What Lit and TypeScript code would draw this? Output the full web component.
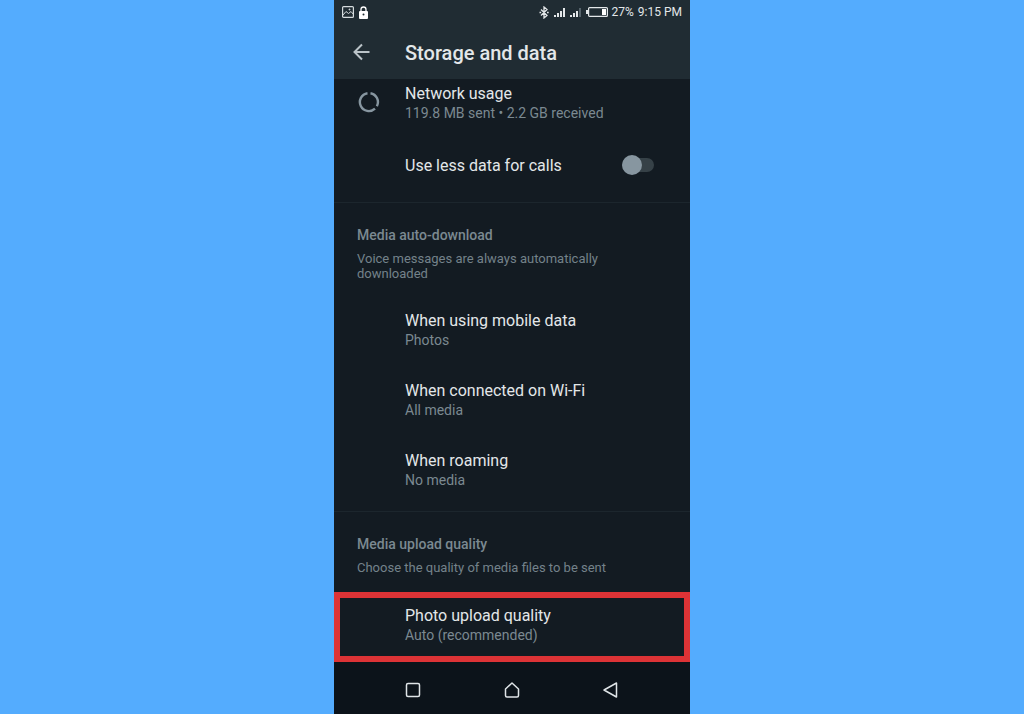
import { LitElement, html, css, svg } from "lit";
import { customElement, property, state } from "lit/decorators.js";

@customElement("setting-row")
class SettingRow extends LitElement {
  @property() label = "";
  @property() detail = "";
  @property({ type: Boolean }) marked = false;

  static styles = css`
    :host {
      display: block;
    }
    .row {
      box-sizing: border-box;
      display: grid;
      grid-template-columns: 24px 1fr;
      column-gap: 24px;
      align-items: center;
      width: 100%;
      padding: 16px 23px;
      border: 0;
      background: none;
      color: inherit;
      font: inherit;
      text-align: left;
      cursor: pointer;
    }
    .marked {
      padding: 8px 17px 12px;
      border: 6px solid #dd3336;
    }
    .text {
      display: flex;
      flex-direction: column;
    }
    .label {
      font-size: 16px;
      line-height: 20px;
      color: #e3e7e9;
    }
    .detail {
      font-size: 14px;
      line-height: 18px;
      color: #7b8991;
    }
    .icon {
      display: flex;
      justify-content: center;
      padding-bottom: 2px;
    }
  `;

  render() {
    return html`
      <button class="row ${this.marked ? "marked" : ""}" type="button">
        <span class="icon"><slot></slot></span>
        <span class="text">
          <span class="label">${this.label}</span>
          <span class="detail">${this.detail}</span>
        </span>
      </button>
    `;
  }
}

@customElement("app-root")
class AppRoot extends LitElement {
  @state() private lessData = false;

  static styles = css`
    :host {
      display: flex;
      justify-content: center;
      min-height: 100vh;
      background: #54acfe;
      font-family: Roboto, "Liberation Sans", sans-serif;
    }
    .phone {
      display: flex;
      flex-direction: column;
      width: 100%;
      max-width: 356px;
      background: #131b22;
      color: #e3e7e9;
    }
    .header {
      background: #202c33;
    }
    .status {
      display: flex;
      justify-content: space-between;
      align-items: center;
      height: 24px;
      padding: 0 8px;
      font-size: 12px;
      line-height: 16px;
      color: #e3e7e9;
    }
    .group {
      display: flex;
      align-items: center;
      gap: 4px;
    }
    .signals {
      display: flex;
      gap: 3px;
    }
    .bar {
      display: grid;
      grid-template-columns: 24px 1fr;
      column-gap: 28px;
      align-items: center;
      height: 55px;
      padding: 0 20px 0 16px;
    }
    .bar h1 {
      margin: 0;
      padding: 2px 0 0 3px;
      font-size: 20px;
      font-weight: 500;
      line-height: 24px;
    }
    .plain {
      display: flex;
      align-items: center;
      justify-content: center;
      padding: 0;
      border: 0;
      background: none;
      color: #dfe4e7;
      cursor: pointer;
    }
    .back {
      color: #bac3c8;
    }
    svg {
      display: block;
    }
    .content {
      flex: 1;
    }
    .section {
      padding-bottom: 6px;
      border-bottom: 1px solid #1c262d;
    }
    .section.first {
      margin-top: -11px;
      padding-bottom: 17px;
    }
    .section.last {
      padding-bottom: 0;
      border-bottom: 0;
    }
    .intro {
      padding: 22px 72px 14px 23px;
    }
    .last .intro {
      padding-bottom: 17px;
    }
    .intro h2 {
      margin: 0;
      font-size: 14px;
      font-weight: 500;
      line-height: 20px;
      color: #7b8991;
    }
    .intro p {
      margin: 6px 0 0;
      font-size: 13px;
      line-height: 15px;
      color: #74828a;
    }
    .toggle {
      display: flex;
      align-items: center;
      justify-content: space-between;
      padding: 16px 36px 9px 71px;
      font-size: 16px;
      line-height: 20px;
      cursor: pointer;
    }
    .toggle span {
      padding-top: 2px;
    }
    .switch {
      appearance: none;
      display: flex;
      align-items: center;
      width: 32px;
      height: 14px;
      margin: 0;
      border-radius: 7px;
      background: #364147;
      cursor: pointer;
    }
    .switch::before {
      content: "";
      width: 20px;
      height: 20px;
      flex: none;
      border-radius: 50%;
      background: #8796a0;
    }
    .switch:checked {
      justify-content: flex-end;
    }
    .nav {
      display: flex;
      justify-content: center;
      gap: 75px;
      padding: 16px 0 12px;
      background: #0c131a;
    }
  `;

  private signal(dimLast: boolean) {
    const heights = [2, 4, 6, 9];
    return html`<svg width="13" height="10" viewBox="0 0 13 10" aria-hidden="true">
      ${heights.map(
        (h, i) => svg`<rect x=${i * 3 + 1} y=${10 - h} width="2" height=${h}
          fill=${dimLast && i === 3 ? "#56636b" : "#e3e7e9"} />`
      )}
    </svg>`;
  }

  private statusBar() {
    return html`
      <div class="status">
        <div class="group">
          <svg width="12" height="12" viewBox="0 0 12 12" fill="none" stroke="#d5dbde" aria-hidden="true">
            <rect x=".6" y=".6" width="10.8" height="10.8" rx="1" stroke-width="1.2" />
            <path d="M1 9l3-3.500 2.500 2L9 5.500l2.500 3" />
            <circle cx="7.500" cy="3.500" r=".5" fill="#d5dbde" />
          </svg>
          <svg width="11" height="13" viewBox="0 0 11 13" aria-hidden="true">
            <path d="M3 6V3.500a2.500 2.500 0 0 1 5 0V6" fill="none" stroke="#fff" stroke-width="1.300" />
            <rect x="1" y="5" width="9" height="8" rx="1" fill="#fff" />
            <circle cx="5.500" cy="8.500" r="1" fill="#202c33" />
          </svg>
        </div>
        <div class="group">
          <svg width="10" height="13" viewBox="0 0 10 13" fill="none" stroke="#e3e7e9" stroke-width="1.300" aria-hidden="true">
            <path d="M2 3.500l6 6L5 12V1l3 2.500-6 6M.5 6.500h1.700M8 6.500h1.700" />
          </svg>
          <div class="signals">${this.signal(false)}${this.signal(true)}</div>
          <svg width="22" height="12" viewBox="0 0 22 12" aria-hidden="true">
            <rect x="2.600" y="1.600" width="18.800" height="8.800" rx="1" fill="none" stroke="#e3e7e9" stroke-width="1.200" />
            <rect x="0" y="4" width="2" height="4" fill="#e3e7e9" />
            <rect x="16" y="3" width="4" height="6" fill="#fff" />
          </svg>
          <span>27%</span>
          <span>9:15 PM</span>
        </div>
      </div>
    `;
  }

  render() {
    return html`
      <div class="phone">
        <header class="header">
          ${this.statusBar()}
          <div class="bar">
            <button class="plain back" type="button" aria-label="Back">
              <svg width="24" height="24" viewBox="0 0 24 24" fill="none" stroke="currentColor" stroke-width="2">
                <path d="M19.500 12H5M12 4.500L4.500 12l7.500 7.500" />
              </svg>
            </button>
            <h1>Storage and data</h1>
          </div>
        </header>

        <main class="content">
          <section class="section first">
            <setting-row label="Network usage" detail="119.8 MB sent • 2.2 GB received">
              <svg width="22" height="22" viewBox="0 0 22 22" fill="none" stroke="#8796a0" stroke-width="2.400" aria-hidden="true">
                <path d="M12.500 2.200A9 9 0 0 1 18.900 15.200M17 17.700A9 9 0 1 1 9.500 2.200" />
              </svg>
            </setting-row>
            <label class="toggle">
              <span>Use less data for calls</span>
              <input
                class="switch"
                type="checkbox"
                role="switch"
                .checked=${this.lessData}
                @change=${(e: Event) => (this.lessData = (e.target as HTMLInputElement).checked)}
              />
            </label>
          </section>

          <section class="section">
            <div class="intro">
              <h2>Media auto-download</h2>
              <p>Voice messages are always automatically downloaded</p>
            </div>
            <setting-row label="When using mobile data" detail="Photos"></setting-row>
            <setting-row label="When connected on Wi-Fi" detail="All media"></setting-row>
            <setting-row label="When roaming" detail="No media"></setting-row>
          </section>

          <section class="section last">
            <div class="intro">
              <h2>Media upload quality</h2>
              <p>Choose the quality of media files to be sent</p>
            </div>
            <setting-row label="Photo upload quality" detail="Auto (recommended)" marked></setting-row>
          </section>
        </main>

        <nav class="nav">
          <button class="plain" type="button" aria-label="Recent apps">
            <svg width="24" height="24" viewBox="0 0 24 24" fill="none" stroke="currentColor" stroke-width="1.500">
              <rect x="5.500" y="5.500" width="13" height="13" rx="1.500" />
            </svg>
          </button>
          <button class="plain" type="button" aria-label="Home">
            <svg width="24" height="24" viewBox="0 0 24 24" fill="none" stroke="currentColor" stroke-width="1.500" stroke-linejoin="round">
              <path d="M5.500 11L12 5l6.500 6V17.500a1.500 1.500 0 0 1-1.500 1.500H7a1.500 1.500 0 0 1-1.500-1.500z" />
            </svg>
          </button>
          <button class="plain" type="button" aria-label="Back to previous screen">
            <svg width="24" height="24" viewBox="0 0 24 24" fill="none" stroke="currentColor" stroke-width="1.500" stroke-linejoin="round">
              <path d="M17.500 5V19L5 12z" />
            </svg>
          </button>
        </nav>
      </div>
    `;
  }
}
